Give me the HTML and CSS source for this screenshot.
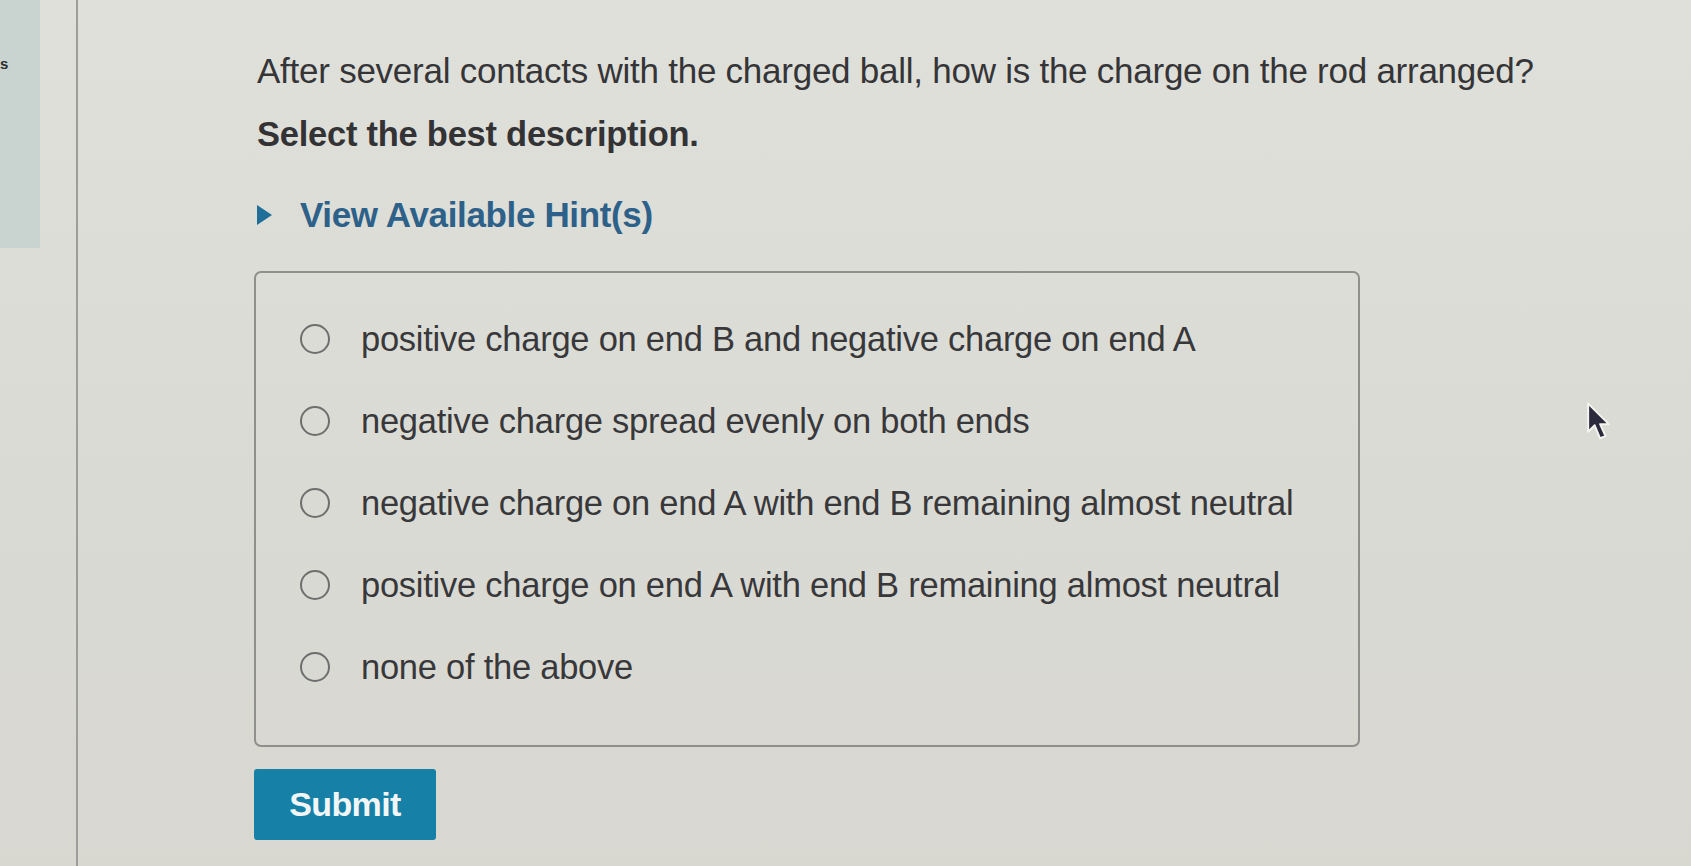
FILE: index.html
```html
<!DOCTYPE html>
<html lang="en">
<head>
<meta charset="utf-8">
<title>Question</title>
<link rel="stylesheet" href="styles.css">
</head>
<body>
<div class="page">
  <aside class="rail">
    <div class="tab"><span class="tab-letter">s</span></div>
  </aside>
  <main class="main">
    <p class="question">After several contacts with the charged ball, how is the charge on the rod arranged?</p>
    <p class="instruction">Select the best description.</p>
    <div class="hint">
      <span class="hint-arrow"></span>
      <span class="hint-text">View Available Hint(s)</span>
    </div>
    <div class="options">
      <label class="option"><span class="radio"></span><span class="option-text">positive charge on end B and negative charge on end A</span></label>
      <label class="option"><span class="radio"></span><span class="option-text">negative charge spread evenly on both ends</span></label>
      <label class="option"><span class="radio"></span><span class="option-text">negative charge on end A with end B remaining almost neutral</span></label>
      <label class="option"><span class="radio"></span><span class="option-text">positive charge on end A with end B remaining almost neutral</span></label>
      <label class="option"><span class="radio"></span><span class="option-text">none of the above</span></label>
    </div>
    <button class="submit" type="button">Submit</button>
  </main>
  <svg class="cursor" width="26" height="44" viewBox="0 0 24 38">
    <path d="M2 2 L2 28 L8 22 L13 34 L18 32 L13 21 L21 21 Z" fill="#2b2a3c" stroke="#f4f4f0" stroke-width="1.8" stroke-linejoin="round"/>
  </svg>
</div>
</body>
</html>
```

FILE: styles.css
```css
html, body {
  margin: 0;
  padding: 0;
}

body {
  background: #dbdbd5;
  font-family: "Liberation Sans", Arial, Helvetica, sans-serif;
  color: #38383a;
  width: 1691px;
  height: 866px;
  overflow: hidden;
}

.page {
  position: relative;
  display: flex;
  height: 866px;
  background: linear-gradient(180deg, #e0e0da 0%, #dadad4 60%, #d8d8d1 100%);
}

.rail {
  width: 76px;
  flex: none;
  border-right: 2px solid #9d9d9b;
}

.tab {
  width: 40px;
  height: 248px;
  background: #c9d3cf;
  overflow: hidden;
}

.tab-letter {
  display: block;
  margin-left: 0;
  padding-top: 54px;
  font-size: 15px;
  font-weight: bold;
  color: #2c2c30;
  line-height: 20px;
}

.main {
  flex: 1;
  padding: 52px 0 0 179px;
}

.question {
  margin: 0;
  font-size: 35px;
  line-height: 38px;
  color: #353538;
  letter-spacing: -0.25px;
}

.instruction {
  margin: 25px 0 0;
  font-size: 34.5px;
  line-height: 38px;
  font-weight: bold;
  color: #333336;
  letter-spacing: -0.25px;
}

.hint {
  display: flex;
  align-items: center;
  gap: 28px;
  margin-top: 43px;
  height: 38px;
}

.hint-arrow {
  width: 0;
  height: 0;
  border-top: 10px solid transparent;
  border-bottom: 10px solid transparent;
  border-left: 15px solid #1f6f99;
}

.hint-text {
  font-size: 35px;
  font-weight: bold;
  color: #2d6189;
  letter-spacing: -0.35px;
}

.options {
  margin: 37px 0 0 -3px;
  width: 1106px;
  box-sizing: border-box;
  border: 2px solid #8f8f8c;
  border-radius: 7px;
  padding: 48px 0 60px 44px;
  display: flex;
  flex-direction: column;
  gap: 46px;
}

.option {
  display: flex;
  align-items: center;
  height: 36px;
  gap: 31px;
}

.radio {
  width: 26px;
  height: 26px;
  border: 2px solid #6e6e6e;
  border-radius: 50%;
  flex: none;
  background: transparent;
}

.option-text {
  font-size: 34.5px;
  line-height: 36px;
  color: #38383b;
  letter-spacing: -0.25px;
}

.submit {
  display: block;
  margin: 22px 0 0 -3px;
  width: 182px;
  height: 71px;
  border: none;
  border-radius: 3px;
  background: #1680a7;
  color: #f3f6f6;
  font-family: "Liberation Sans", Arial, Helvetica, sans-serif;
  font-size: 34px;
  font-weight: bold;
  letter-spacing: -0.6px;
  padding: 0;
}

.cursor {
  position: absolute;
  left: 1586px;
  top: 400px;
}
```
